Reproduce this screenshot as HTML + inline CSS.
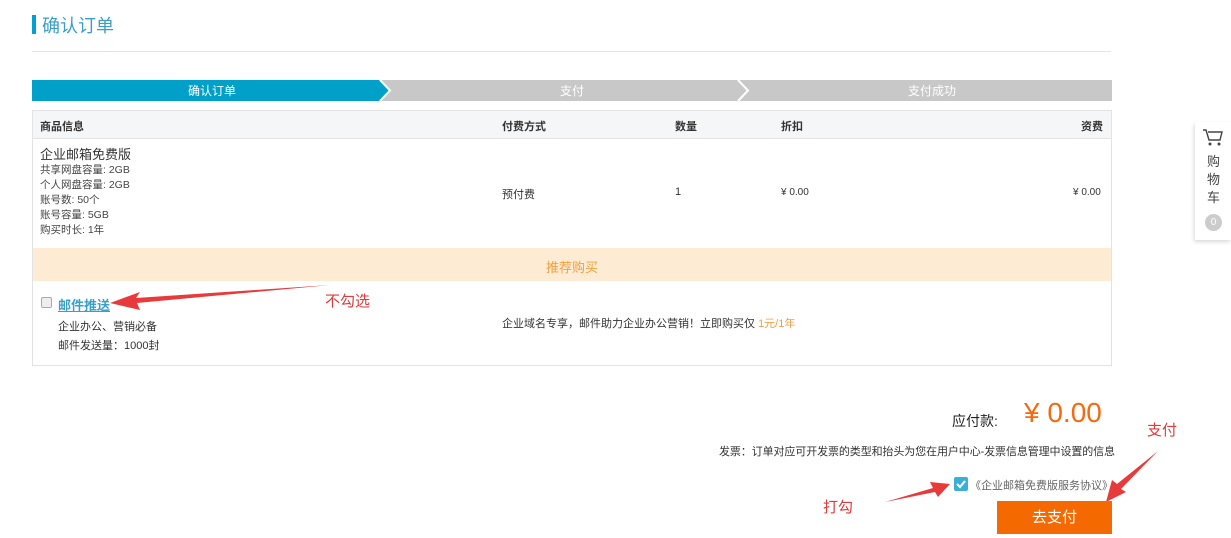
<!DOCTYPE html>
<html><head><meta charset="utf-8"><style>
*{margin:0;padding:0;box-sizing:border-box}
body{width:1231px;height:538px;background:#fff;font-family:"Liberation Sans","Noto Sans CJK SC",sans-serif;font-size:12px;color:#333;position:relative;overflow:hidden}
.a{position:absolute;white-space:nowrap}
</style></head><body>
<div class="a" style="left:32px;top:15px;width:4px;height:19px;background:#00a0d2"></div>
<div class="a" style="left:42px;top:12px;font-size:18px;color:#3a9ec8">确认订单</div>
<div class="a" style="left:32px;top:51px;width:1079px;height:1px;background:#e5e5e5"></div>
<svg class="a" style="left:32px;top:80px" width="1080" height="22">
<rect x="0" y="0" width="1080" height="21" fill="#c8c8c8"/>
<polygon points="0,0 347,0 357,10.5 347,21 0,21" fill="#00a0c8"/>
<polyline points="348,0 358,10.5 348,21" fill="none" stroke="#fff" stroke-width="2"/>
<polyline points="706,0 716,10.5 706,21" fill="none" stroke="#fff" stroke-width="2"/>
<text x="180" y="15" text-anchor="middle" fill="#fff" font-size="12">确认订单</text>
<text x="540" y="15" text-anchor="middle" fill="#fff" font-size="12">支付</text>
<text x="900" y="15" text-anchor="middle" fill="#fff" font-size="12">支付成功</text>
</svg>
<div class="a" style="left:32px;top:110px;width:1080px;height:256px;border:1px solid #e3e3e3"></div>
<div class="a" style="left:33px;top:111px;width:1078px;height:28px;background:#f5f6f8;border-bottom:1px solid #e3e3e3"></div>
<div class="a" style="left:40px;top:118px;font-weight:bold;font-size:11px">商品信息</div>
<div class="a" style="left:502px;top:118px;font-weight:bold;font-size:11px">付费方式</div>
<div class="a" style="left:675px;top:118px;font-weight:bold;font-size:11px">数量</div>
<div class="a" style="left:781px;top:118px;font-weight:bold;font-size:11px">折扣</div>
<div class="a" style="left:1081px;top:118px;font-weight:bold;font-size:11px">资费</div>
<div class="a" style="left:40px;top:147px;font-size:13px;line-height:16px">企业邮箱免费版</div>
<div class="a" style="left:40px;top:163px;font-size:10.5px;line-height:15px;color:#444">共享网盘容量: 2GB<br>个人网盘容量: 2GB<br>账号数: 50个<br>账号容量: 5GB<br>购买时长: 1年</div>
<div class="a" style="left:502px;top:186px;font-size:11px">预付费</div>
<div class="a" style="left:675px;top:186px;font-size:11px">1</div>
<div class="a" style="left:781px;top:187px;font-size:10px">¥ 0.00</div>
<div class="a" style="left:1073px;top:187px;font-size:10px">¥ 0.00</div>
<div class="a" style="left:33px;top:248px;width:1078px;height:33px;background:#fdebd4"></div>
<div class="a" style="left:546px;top:257px;color:#f0a040;font-size:13px">推荐购买</div>
<div class="a" style="left:41px;top:297px;width:11px;height:11px;border:1px solid #aaa;border-radius:2px;background:#eee"></div>
<div class="a" style="left:58px;top:295px;font-size:13px;color:#3aa0c8;text-decoration:underline;font-weight:bold">邮件推送</div>
<div class="a" style="left:58px;top:318px;font-size:11px;line-height:19px">企业办公、营销必备<br>邮件发送量：1000封</div>
<div class="a" style="left:502px;top:315px;font-size:11px">企业域名专享，邮件助力企业办公营销！立即购买仅 <span style="color:#f0a040">1元/1年</span></div>
<div class="a" style="left:325px;top:290px;font-size:15px;color:#e03a3a">不勾选</div>
<svg class="a" style="left:0;top:0" width="1231" height="538">
<polygon points="110,303 140,292 136,298 330,285 137,303 140,310" fill="#e83a3a"/>
<polygon points="950,484 930,482 933,488 885,502 935,492 938,497" fill="#e83a3a"/>
<polygon points="1106,502 1112,480 1117,484 1158,451 1121,489 1126,492" fill="#e83a3a"/>
</svg>
<div class="a" style="left:952px;top:411px;font-size:14px;color:#222">应付款:</div>
<div class="a" style="left:1024px;top:397px;font-size:28px;color:#f56a10">¥ 0.00</div>
<div class="a" style="left:1147px;top:419px;font-size:15px;color:#e03a3a">支付</div>
<div class="a" style="left:719px;top:443px;font-size:11px;letter-spacing:-0.1px">发票：订单对应可开发票的类型和抬头为您在用户中心-发票信息管理中设置的信息</div>
<div class="a" style="left:954px;top:477px;width:14px;height:14px;background:#3ab0d8;border-radius:2px"></div>
<svg class="a" style="left:954px;top:477px" width="14" height="14"><polyline points="3,7 6,10 11,4" fill="none" stroke="#fff" stroke-width="2"/></svg>
<div class="a" style="left:970px;top:477px;font-size:11px;color:#666">《企业邮箱免费版服务协议》</div>
<div class="a" style="left:823px;top:496px;font-size:15px;color:#e03a3a">打勾</div>
<div class="a" style="left:997px;top:501px;width:115px;height:33px;background:#f56a00;color:#fff;font-size:15px;text-align:center;line-height:33px">去支付</div>
<div class="a" style="left:1195px;top:122px;width:36px;height:118px;background:#fff;box-shadow:-1px 2px 4px rgba(0,0,0,.15)"></div>
<svg class="a" style="left:1202px;top:128px" width="22" height="20"><path d="M1 2h3l3 10h11l2-8H6" fill="none" stroke="#444" stroke-width="1.4"/><circle cx="8" cy="16" r="1.5" fill="#444"/><circle cx="17" cy="16" r="1.5" fill="#444"/></svg>
<div class="a" style="left:1207px;top:153px;font-size:13px;line-height:18px;color:#444;white-space:normal;width:14px">购物车</div>
<div class="a" style="left:1205px;top:214px;width:17px;height:17px;border-radius:50%;background:#ccc;color:#fff;font-size:10px;text-align:center;line-height:17px">0</div>
</body></html>
